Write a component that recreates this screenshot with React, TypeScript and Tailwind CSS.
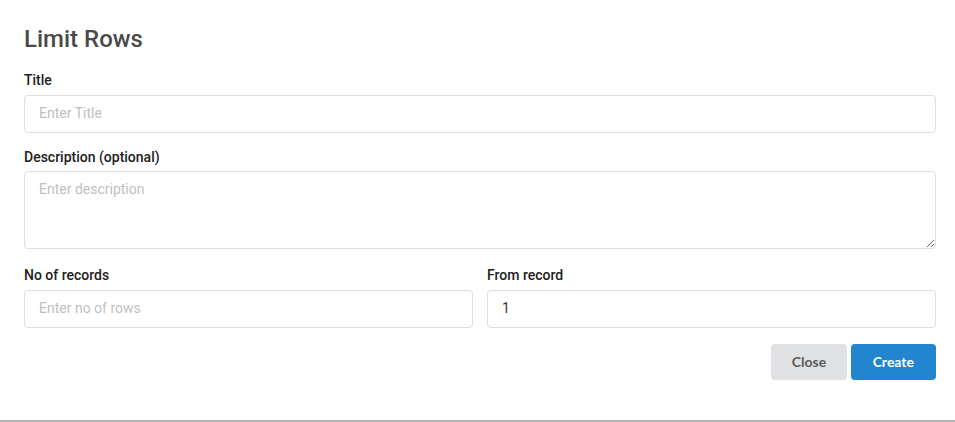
export default function App() {
  return (
    <div className="h-[422px] w-full border-b-2 border-[#b5b5b5] bg-white font-['Roboto',sans-serif]">
      <div className="pl-6 pr-[19px] pt-[25px]">
        <h1 className="mb-[19px] text-2xl leading-7 font-medium text-[#4a4a4a]">Limit Rows</h1>

        <div className="mb-4">
          <label className="mb-[7px] block text-sm leading-4 font-medium text-[#212121]">Title</label>
          <input
            type="text"
            placeholder="Enter Title"
            className="block h-[38px] w-full rounded border border-[#dededf] px-[14px] pb-[2px] text-sm text-[#333] outline-none placeholder:text-[#bfbfbf]"
          />
        </div>

        <div className="mb-[18px]">
          <label className="mb-[6px] block text-sm leading-4 font-medium text-[#212121]">Description (optional)</label>
          <textarea
            placeholder="Enter description"
            className="block h-[78px] w-full rounded border border-[#dededf] px-[14px] py-[9px] text-sm leading-[17px] text-[#333] outline-none placeholder:text-[#bfbfbf]"
          />
        </div>

        <div className="mb-4 grid grid-cols-2 gap-[14px]">
          <div>
            <label className="mb-[7px] block text-sm leading-4 font-medium text-[#212121]">No of records</label>
            <input
              type="text"
              placeholder="Enter no of rows"
              className="block h-[38px] w-full rounded border border-[#dededf] px-[14px] pb-[2px] text-sm text-[#333] outline-none placeholder:text-[#bfbfbf]"
            />
          </div>
          <div>
            <label className="mb-[7px] block text-sm leading-4 font-medium text-[#212121]">From record</label>
            <input
              type="text"
              defaultValue="1"
              className="block h-[38px] w-full rounded border border-[#dededf] px-[14px] pb-[2px] text-sm text-[#333] outline-none"
            />
          </div>
        </div>

        <div className="flex justify-end gap-1">
          <button className="h-9 rounded bg-[#e0e1e2] px-[20.5px] font-['Lato',sans-serif] text-sm font-bold text-[#5a5a5a]">
            Close
          </button>
          <button className="h-9 rounded bg-[#2185d0] px-[22px] font-['Lato',sans-serif] text-sm font-bold text-white">
            Create
          </button>
        </div>
      </div>
    </div>
  );
}
